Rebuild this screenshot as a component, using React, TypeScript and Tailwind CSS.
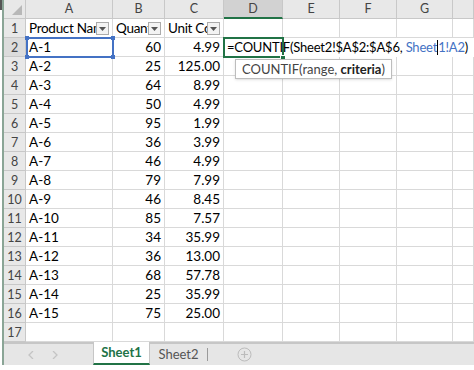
import React from "react";

const rows: [string, string, string][] = [
  ["A-1", "60", "4.99"],
  ["A-2", "25", "125.00"],
  ["A-3", "64", "8.99"],
  ["A-4", "50", "4.99"],
  ["A-5", "95", "1.99"],
  ["A-6", "36", "3.99"],
  ["A-7", "46", "4.99"],
  ["A-8", "79", "7.99"],
  ["A-9", "46", "8.45"],
  ["A-10", "85", "7.57"],
  ["A-11", "34", "35.99"],
  ["A-12", "36", "13.00"],
  ["A-13", "68", "57.78"],
  ["A-14", "25", "35.99"],
  ["A-15", "75", "25.00"],
];

const FONT = { fontFamily: 'Lato, "Noto Sans", sans-serif' };

function FilterBtn() {
  return (
    <div className="absolute right-[3px] top-[3px] w-[13px] h-[13px] border border-[#ababab] bg-[#f3f3f3] flex items-center justify-center">
      <svg width="7" height="4" viewBox="0 0 7 4">
        <path d="M0 0h7L3.5 4z" fill="#555" />
      </svg>
    </div>
  );
}

function Cell({ children, className = "" }: { children?: React.ReactNode; className?: string }) {
  return (
    <div className={"relative h-[19px] border-r border-b border-[#d9d9d9] bg-white text-[13.5px] leading-[19px] text-black overflow-hidden whitespace-nowrap " + className}>
      {children}
    </div>
  );
}

function HeadCell({ text }: { text: string }) {
  return (
    <Cell>
      <div className="absolute left-[3px] top-0 right-[16px] overflow-hidden whitespace-nowrap tracking-[-0.3px]">{text}</div>
      <FilterBtn />
    </Cell>
  );
}

function RowHead({ n, sel = false }: { n: number; sel?: boolean }) {
  return (
    <div className={"h-[19px] border-r border-b border-[#c8c8c8] text-[12.5px] leading-[19px] text-[#444] text-center " + (sel ? "bg-[#dcdcdc]" : "bg-[#e8e8e8]")}>
      {n}
    </div>
  );
}

function ColHead({ l, sel = false }: { l: string; sel?: boolean }) {
  return (
    <div className={"h-[19px] border-r border-[#c8c8c8] text-[12.5px] leading-[18px] text-center text-[#444] " + (sel ? "bg-[#d2d2d2] border-b-2 border-b-[#217346]" : "bg-[#e8e8e8] border-b border-b-[#c8c8c8]")}>
      {l}
    </div>
  );
}

export default function App() {
  return (
    <div className="w-[474px] h-[370px] bg-white overflow-hidden relative" style={FONT}>
      <div className="flex h-[365px]">
        <div className="w-[2px] bg-white relative">
          <div className="absolute left-0 top-0 w-[2px] h-[10px] bg-[#555]" />
        </div>
        <div className="w-[2px] bg-[#8aa596]" />
        <div className="flex-1 flex flex-col relative">
          <div className="grid grid-cols-[22px_87px_52px_59px_59px_57px_57px_56px_1fr]">
            <div className="h-[19px] bg-[#e8e8e8] border-r border-b border-[#c8c8c8] relative">
              <svg className="absolute right-[3px] bottom-[3px]" width="10" height="10" viewBox="0 0 10 10">
                <path d="M10 0V10H0z" fill="#b8b8b8" />
              </svg>
            </div>
            {["A", "B", "C", "D", "E", "F", "G", ""].map((l) => (
              <ColHead key={l || "H"} l={l} sel={l === "D"} />
            ))}

            <RowHead n={1} />
            <HeadCell text="Product Name" />
            <HeadCell text="Quantity" />
            <HeadCell text="Unit Cost" />
            <Cell /><Cell /><Cell /><Cell /><Cell />

            {rows.map((r, i) => (
              <React.Fragment key={r[0]}>
                <RowHead n={i + 2} sel={i === 0} />
                <Cell className="pl-[3px]">{r[0]}</Cell>
                <Cell className="text-right pr-[3px]">{r[1]}</Cell>
                <Cell className="text-right pr-[3px]">{r[2]}</Cell>
                <Cell /><Cell /><Cell /><Cell /><Cell />
              </React.Fragment>
            ))}

            <RowHead n={17} />
            <Cell /><Cell /><Cell /><Cell /><Cell /><Cell /><Cell /><Cell />
          </div>

          {/* A2 reference highlight */}
          <div className="absolute left-[22px] top-[37px] w-[88px] h-[21px] border-2 border-[#4472c4]">
            <div className="absolute -left-[3px] -top-[3px] w-[4px] h-[4px] bg-[#4472c4]" />
            <div className="absolute -right-[3px] -top-[3px] w-[4px] h-[4px] bg-[#4472c4]" />
            <div className="absolute -left-[3px] -bottom-[3px] w-[4px] h-[4px] bg-[#4472c4]" />
            <div className="absolute -right-[3px] -bottom-[3px] w-[4px] h-[4px] bg-[#4472c4]" />
          </div>

          {/* Formula edit overlay */}
          <div className="absolute left-[221px] top-[38px] right-0 h-[19px] bg-white pl-[2px] text-[13px] tracking-[-0.2px] leading-[19px] whitespace-pre text-black">
            =COUNTIF(Sheet2!$A$2:$A$6, <span className="text-[#4472c4]">Sheet</span><span className="inline-block w-[1px] h-[15px] bg-black align-[-3px]" /><span className="text-[#4472c4]">1!A2</span>)
          </div>
          <div className="absolute left-[219px] top-[37px] w-[61px] h-[21px] border-2 border-[#217346] pointer-events-none" />
          <div className="absolute left-[276px] top-[55px] w-[6px] h-[6px] bg-[#217346] border border-white" />

          {/* Tooltip */}
          <div className="absolute left-[231px] top-[59px] h-[20px] px-[6px] bg-white border border-[#bdbdbd] shadow-sm text-[13px] leading-[18px] text-[#444] whitespace-nowrap">
            COUNTIF(range, <span className="font-bold text-[#222]">criteria</span>)
          </div>

          {/* Sheet tabs bar */}
          <div className="mt-auto h-[23px] bg-[#e6e6e6] border-t-2 border-[#c6c6c6] flex items-stretch text-[13px]">
            <div className="w-[89px] flex items-center gap-[18px] pl-[24px]">
              <svg width="6" height="8" viewBox="0 0 6 8"><path d="M5 0L1 4l4 4" fill="none" stroke="#c4c4c4" strokeWidth="1.3" /></svg>
              <svg width="6" height="8" viewBox="0 0 6 8"><path d="M1 0l4 4-4 4" fill="none" stroke="#c4c4c4" strokeWidth="1.3" /></svg>
            </div>
            <div className="-mt-[2px] w-[57px] bg-white border-b-2 border-[#217346] flex items-center justify-center font-bold text-[#217346] border-x border-x-[#c6c6c6]">
              Sheet1
            </div>
            <div className="w-[57px] flex items-center justify-center text-[#555]">Sheet2</div>
            <div className="w-px bg-[#9a9a9a] my-[4px]" />
            <div className="pl-[29px] flex items-center">
              <svg width="15" height="15" viewBox="0 0 15 15">
                <circle cx="7.5" cy="7.5" r="6.5" fill="none" stroke="#bcbcbc" strokeWidth="1" />
                <path d="M7.5 4v7M4 7.5h7" stroke="#bcbcbc" strokeWidth="1.2" />
              </svg>
            </div>
          </div>
        </div>
      </div>
    </div>
  );
}
